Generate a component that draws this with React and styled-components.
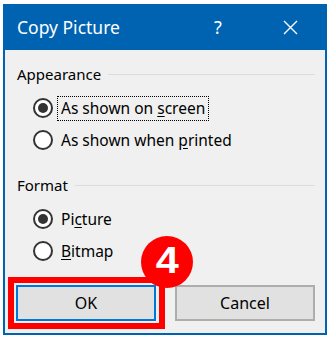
import React from 'react';
import styled, { createGlobalStyle } from 'styled-components';

const GlobalStyle = createGlobalStyle`
  html, body {
    margin: 0;
    padding: 0;
    background: #ffffff;
  }
  body {
    font-family: "Noto Sans", "Open Sans", sans-serif;
  }
`;

const Page = styled.div`
  width: 332px;
  height: 340px;
  padding: 4px 0 0 3px;
  box-sizing: border-box;
`;

const Window = styled.div`
  width: 324px;
  height: 331px;
  display: flex;
  flex-direction: column;
`;

const TitleBar = styled.div`
  height: 46px;
  background: #0063b1;
  display: flex;
  align-items: center;
  color: #ffffff;
  flex-shrink: 0;
`;

const Title = styled.div`
  flex: 1;
  padding-left: 14px;
  font-size: 17.5px;
  line-height: 20px;
  margin-top: -1px;
`;

const TitleButton = styled.div`
  width: ${(p) => p.$w}px;
  height: 46px;
  display: flex;
  align-items: center;
  justify-content: center;
  font-size: 18px;
`;

const Body = styled.div`
  flex: 1;
  background: #f0f0f0;
  border: 2px solid #0063b1;
  border-top: none;
  display: flex;
  flex-direction: column;
  padding: 0 10px 0 12px;
`;

const GroupHeader = styled.div`
  display: flex;
  align-items: center;
  height: 20px;
  margin-top: ${(p) => p.$top}px;
  font-size: 15px;
  color: #000;
`;

const HeaderLine = styled.div`
  flex: 1;
  height: 1px;
  background: #dcdcdc;
  margin-left: 7px;
`;

const RadioList = styled.div`
  display: flex;
  flex-direction: column;
  margin-top: 8px;
  padding-left: 16px;
`;

const RadioRow = styled.div`
  height: 32px;
  display: flex;
  align-items: center;
`;

const Circle = styled.span`
  width: 20px;
  height: 20px;
  box-sizing: border-box;
  border: 2px solid #333333;
  border-radius: 50%;
  background: #ffffff;
  display: flex;
  align-items: center;
  justify-content: center;
  flex-shrink: 0;

  &::after {
    content: '';
    width: 10px;
    height: 10px;
    border-radius: 50%;
    background: #333333;
    display: ${(p) => (p.$checked ? 'block' : 'none')};
  }
`;

const RadioText = styled.span`
  margin-left: 4px;
  padding: 0 3px;
  height: 23px;
  line-height: 23px;
  font-size: 15.5px;
  color: #000;
  border: 1px dotted ${(p) => (p.$focused ? '#000' : 'transparent')};

  u {
    text-underline-offset: 2px;
  }
`;

const ButtonRow = styled.div`
  display: flex;
  align-items: center;
  margin: 10px 0 0 -9px;
`;

const Highlight = styled.div`
  position: relative;
  border: 6px solid #ff0000;
  padding: 2px 3px 2px 2px;
`;

const Button = styled.div`
  width: 140px;
  height: 36px;
  box-sizing: border-box;
  background: #e1e1e1;
  border: 2px solid ${(p) => (p.$default ? '#0078d7' : '#adadad')};
  display: flex;
  align-items: center;
  justify-content: center;
  font-size: 16px;
  color: #000;
`;

const CancelButton = styled(Button)`
  margin-left: 10px;
`;

const Badge = styled.div`
  position: absolute;
  left: 127px;
  top: -47px;
  width: 52px;
  height: 52px;
  border-radius: 50%;
  background: #ff0000;
  color: #ffffff;
  display: flex;
  align-items: center;
  justify-content: center;
  font-family: "Liberation Sans", Arial, sans-serif;
  font-weight: bold;
  font-size: 37px;
  line-height: 1;
  padding-bottom: 4px;
  box-sizing: border-box;

  span {
    display: inline-block;
    transform: scaleX(1.12);
  }
`;

const Radio = ({ checked, focused, children }) => (
  <RadioRow>
    <Circle $checked={checked} />
    <RadioText $focused={focused}>{children}</RadioText>
  </RadioRow>
);

const CloseIcon = () => (
  <svg width="15" height="15" viewBox="0 0 15 15">
    <path d="M1 1 L14 14 M14 1 L1 14" stroke="#ffffff" strokeWidth="1.4" fill="none" />
  </svg>
);

export default function App() {
  return (
    <>
      <GlobalStyle />
      <Page>
        <Window>
          <TitleBar>
            <Title>Copy Picture</Title>
            <TitleButton $w={72}>?</TitleButton>
            <TitleButton $w={73}>
              <CloseIcon />
            </TitleButton>
          </TitleBar>
          <Body>
            <GroupHeader $top={14}>
              Appearance
              <HeaderLine />
            </GroupHeader>
            <RadioList>
              <Radio checked focused>
                As shown on <u>s</u>creen
              </Radio>
              <Radio>
                As shown when <u>p</u>rinted
              </Radio>
            </RadioList>
            <GroupHeader $top={19}>
              Format
              <HeaderLine />
            </GroupHeader>
            <RadioList>
              <Radio checked>
                Pi<u>c</u>ture
              </Radio>
              <Radio>
                <u>B</u>itmap
              </Radio>
            </RadioList>
            <ButtonRow>
              <Highlight>
                <Button $default>OK</Button>
                <Badge>
                  <span>4</span>
                </Badge>
              </Highlight>
              <CancelButton>Cancel</CancelButton>
            </ButtonRow>
          </Body>
        </Window>
      </Page>
    </>
  );
}
